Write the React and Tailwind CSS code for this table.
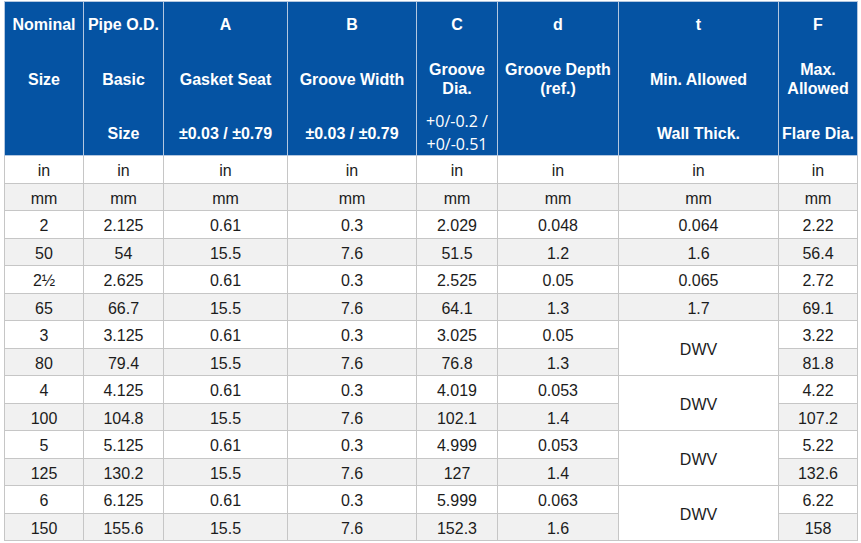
const cols = [79, 80, 124, 129, 81, 121, 160, 79]

const headers = [
  { top: 'Nominal', mid: ['Size'], bot: [] },
  { top: 'Pipe O.D.', mid: ['Basic'], bot: ['Size'] },
  { top: 'A', mid: ['Gasket Seat'], bot: ['±0.03 / ±0.79'] },
  { top: 'B', mid: ['Groove Width'], bot: ['±0.03 / ±0.79'] },
  { top: 'C', mid: ['Groove', 'Dia.'], bot: ['+0/-0.2 /', '+0/-0.51'], thin: true },
  { top: 'd', mid: ['Groove Depth', '(ref.)'], bot: [] },
  { top: 't', mid: ['Min. Allowed'], bot: ['Wall Thick.'] },
  { top: 'F', mid: ['Max.', 'Allowed'], bot: ['Flare Dia.'] },
]

// null in t column = covered by DWV rowspan
const rows = [
  ['in', 'in', 'in', 'in', 'in', 'in', 'in', 'in'],
  ['mm', 'mm', 'mm', 'mm', 'mm', 'mm', 'mm', 'mm'],
  ['2', '2.125', '0.61', '0.3', '2.029', '0.048', '0.064', '2.22'],
  ['50', '54', '15.5', '7.6', '51.5', '1.2', '1.6', '56.4'],
  ['2½', '2.625', '0.61', '0.3', '2.525', '0.05', '0.065', '2.72'],
  ['65', '66.7', '15.5', '7.6', '64.1', '1.3', '1.7', '69.1'],
  ['3', '3.125', '0.61', '0.3', '3.025', '0.05', 'DWV', '3.22'],
  ['80', '79.4', '15.5', '7.6', '76.8', '1.3', null, '81.8'],
  ['4', '4.125', '0.61', '0.3', '4.019', '0.053', 'DWV', '4.22'],
  ['100', '104.8', '15.5', '7.6', '102.1', '1.4', null, '107.2'],
  ['5', '5.125', '0.61', '0.3', '4.999', '0.053', 'DWV', '5.22'],
  ['125', '130.2', '15.5', '7.6', '127', '1.4', null, '132.6'],
  ['6', '6.125', '0.61', '0.3', '5.999', '0.063', 'DWV', '6.22'],
  ['150', '155.6', '15.5', '7.6', '152.3', '1.6', null, '158'],
]

function HeadCell({ h }) {
  return (
    <th className="border border-[#b3c7e0] bg-[#0553a3] p-0 align-top font-bold text-white">
      <div className="flex h-[153px] flex-col text-[16px]">
        <div className="flex h-[45px] items-center justify-center">{h.top}</div>
        <div className="flex h-[64px] flex-col items-center justify-center leading-[19px]">
          {h.mid.map((t) => <div key={t}>{t}</div>)}
        </div>
        <div
          className={`flex h-[44px] flex-col items-center justify-center ${
            h.thin ? "font-['Open_Sans',sans-serif] font-normal leading-[23px]" : 'leading-[19px]'
          }`}
        >
          {h.bot.map((t) => <div key={t}>{t}</div>)}
        </div>
      </div>
    </th>
  )
}

export default function App() {
  return (
    <div className="bg-white pl-[4px] pt-px font-['Liberation_Sans',Arial,sans-serif]">
      <table className="table-fixed border-collapse" style={{ width: 853 }}>
        <colgroup>
          {cols.map((w, i) => <col key={i} style={{ width: w }} />)}
        </colgroup>
        <thead>
          <tr>
            {headers.map((h) => <HeadCell key={h.top} h={h} />)}
          </tr>
        </thead>
        <tbody>
          {rows.map((r, ri) => (
            <tr key={ri} className={`h-[27.5px] ${ri % 2 ? 'bg-[#f1f1f1]' : 'bg-white'}`}>
              {r.map((c, ci) => {
                if (c === null) return null
                const dwv = c === 'DWV'
                return (
                  <td
                    key={ci}
                    rowSpan={dwv ? 2 : 1}
                    className={`border border-[#c6c6c6] p-0 pt-[4px] text-center align-middle text-[16px] leading-none text-[#1c1c1c] ${dwv ? 'bg-white' : ''}`}
                  >
                    {c}
                  </td>
                )
              })}
            </tr>
          ))}
        </tbody>
      </table>
    </div>
  )
}
